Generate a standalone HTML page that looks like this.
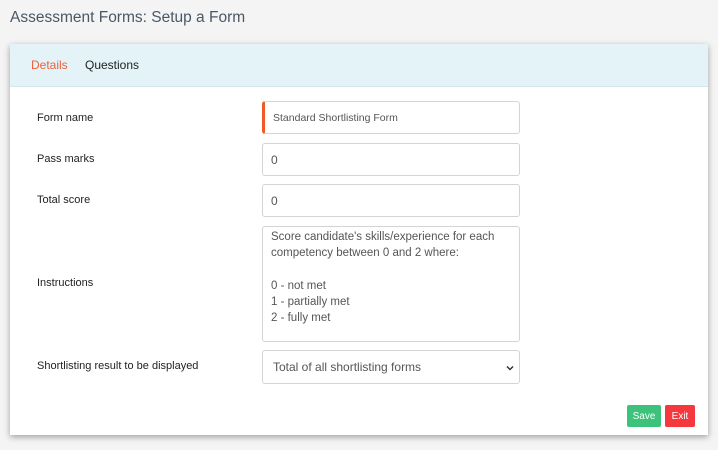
<!DOCTYPE html>
<html><head><style>
*{box-sizing:border-box;margin:0;padding:0}
body{width:718px;height:450px;background:#f4f4f4;font-family:"Liberation Sans",sans-serif;position:relative;overflow:hidden}
.t{position:absolute;left:10px;top:9px;font-size:15.5px;color:#4a5866}
.card{position:absolute;left:10px;top:44px;width:698px;height:391px;background:#fff;box-shadow:0 2px 6px rgba(0,0,0,.35)}
.hd{height:43px;background:#e3f3f8;border-bottom:1px solid #d2e6ee;position:relative}
.tab{position:absolute;top:14px;font-size:12px}
.l{position:absolute;left:27px;font-size:11px;color:#222}
.in{position:absolute;left:252px;width:258px;border:1px solid #d4d4d4;border-radius:3px;font-size:12px;color:#555;padding-left:8px}
.btn{position:absolute;top:361px;height:22px;color:#fff;font-size:10px;display:flex;align-items:center;justify-content:center;border-radius:2px}
</style></head><body>
<div class="t">Assessment Forms: Setup a Form</div>
<div class="card">
<div class="hd"><span class="tab" style="left:21px;color:#f0603a">Details</span><span class="tab" style="left:75px;color:#222">Questions</span></div>
<div class="l" style="top:68px">Form name</div>
<div class="in" style="top:57px;height:33px;line-height:33px;border-left:3px solid #f05a28;font-size:10.5px">Standard Shortlisting Form</div>
<div class="l" style="top:109px">Pass marks</div>
<div class="in" style="top:99px;height:33px;line-height:32px">0</div>
<div class="l" style="top:150px">Total score</div>
<div class="in" style="top:140px;height:33px;line-height:32px">0</div>
<div class="l" style="top:233px">Instructions</div>
<div class="in" style="top:182px;height:116px;line-height:16.3px;padding-top:2px;font-size:11.5px">Score candidate's skills/experience for each competency between 0 and 2 where:<br><br>0 - not met<br>1 - partially met<br>2 - fully met</div>
<div class="l" style="top:316px">Shortlisting result to be displayed</div>
<div class="in" style="top:306px;height:34px;line-height:33px;padding-left:10px">Total of all shortlisting forms<svg style="position:absolute;right:5px;top:14px" width="8" height="6" viewBox="0 0 8 6"><path d="M1 1.5L4 4.5L7 1.5" fill="none" stroke="#333" stroke-width="1.5"/></svg></div>
<div class="btn" style="left:617px;width:34px;background:#3cc27a">Save</div>
<div class="btn" style="left:655px;width:30px;background:#f5383e">Exit</div>
</div>
</body></html>
